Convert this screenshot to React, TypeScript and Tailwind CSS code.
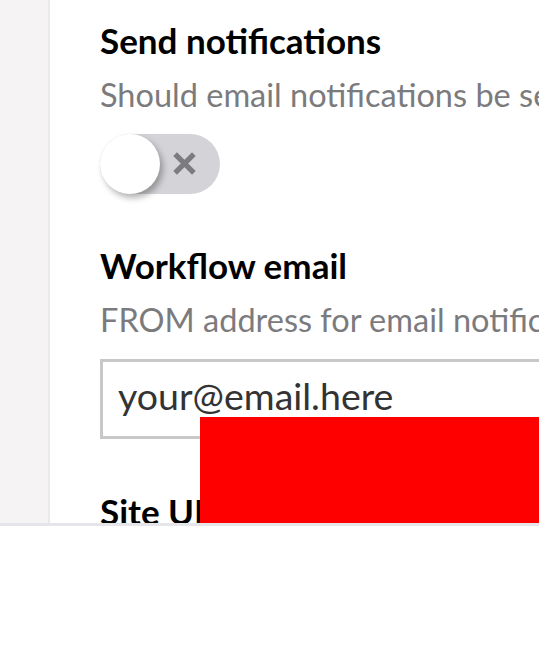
export default function App() {
  return (
    <div className="w-[539px] h-[647px] bg-white" style={{ fontFamily: "Lato, 'Noto Sans', sans-serif" }}>
      <div className="flex h-[526px] overflow-hidden border-b-[3px] border-[#e6e6ea]">
        {/* sidebar */}
        <div className="w-[50px] shrink-0 bg-[#f5f3f4] border-r-2 border-[#ebe9ea]" />

        {/* settings form */}
        <div className="relative flex-1 pl-[50px] pt-[18px] whitespace-nowrap">
          <div className="flex flex-col items-start">
            <h2 className="text-[35px] font-bold leading-[44px] text-black">Send notifications</h2>
            <p className="mt-[11px] text-[32.5px] leading-[44px] text-[#7b7b7e]">Should email notifications be sent?</p>
            <button className="relative mt-[17px] h-[60px] w-[120px] rounded-full bg-[#d4d4d8]">
              <span className="absolute left-0 top-0 h-[60px] w-[60px] rounded-full bg-white shadow-[3px_4px_6px_rgba(0,0,0,0.3)]" />
              <svg className="absolute left-[72px] top-[17px]" width="25" height="25" viewBox="0 0 24 24">
                <path d="M3 3 L21 21 M21 3 L3 21" stroke="#7b7b80" strokeWidth="5" />
              </svg>
            </button>

            <h2 className="mt-[49px] text-[35px] font-bold leading-[44px] text-black">Workflow email</h2>
            <p className="mt-[11px] text-[32.5px] leading-[44px] text-[#7b7b7e]">FROM address for email notifications</p>
            <div className="mt-[17px] h-[80px] w-[500px] border-[3px] border-[#c8c8c8] px-[15px] pt-[12px]">
              <span className="block text-[37.5px] leading-[44px] text-[#333]">your@email.here</span>
            </div>

            <h2 className="mt-[50px] text-[35px] font-bold leading-[44px] text-black">Site URL</h2>
          </div>

          <div className="absolute left-[150px] top-[417px] h-[120px] w-[400px] bg-[#ff0000]" />
        </div>
      </div>
    </div>
  );
}
